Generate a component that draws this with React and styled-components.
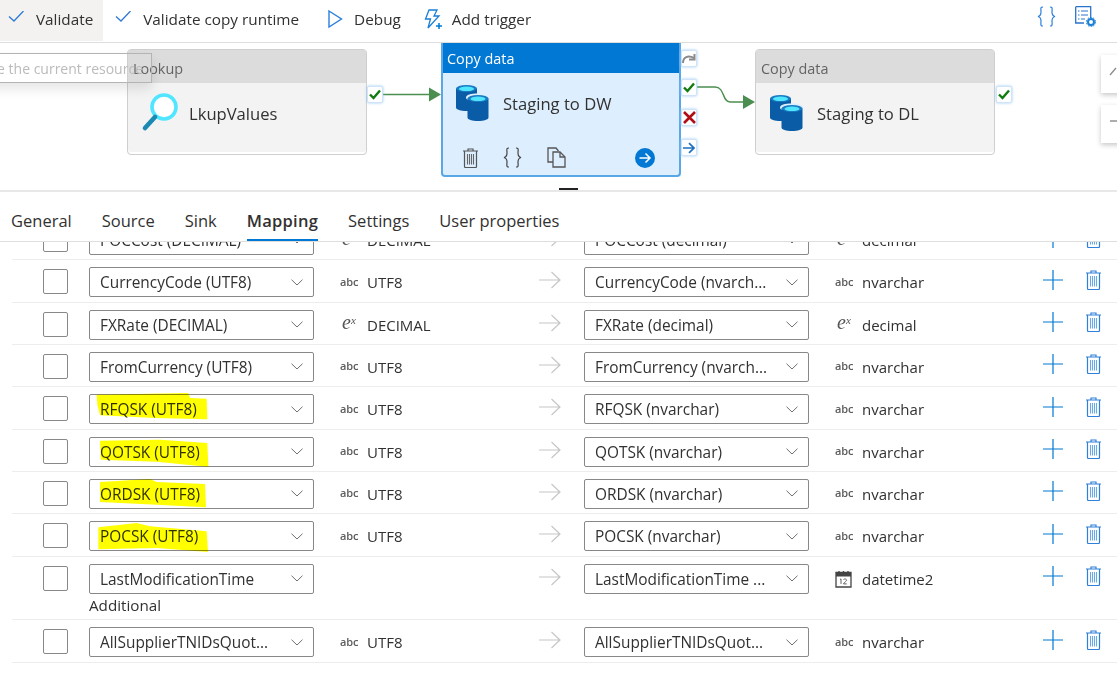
import React from "react";
import styled, { createGlobalStyle } from "styled-components";

const Global = createGlobalStyle`
  html, body { margin: 0; padding: 0; background: #fff; }
  body { font-family: "Open Sans", "Noto Sans", sans-serif; color: #323130; }
  * { box-sizing: border-box; }
`;

const Page = styled.div`
  width: 1117px; height: 682px; overflow: hidden; display: flex; flex-direction: column; background: #fff;
`;

/* ---------- toolbar ---------- */
const Toolbar = styled.header`
  height: 43px; flex: none; display: flex; align-items: flex-start; border-bottom: 1px solid #dedede;
  font-size: 15.3px;
`;
const ToolButton = styled.div`
  height: 41px; display: flex; align-items: center; gap: ${p => p.$gap ?? 12}px;
  padding: 0 ${p => p.$pr ?? 8}px 0 8px; margin-left: ${p => p.$ml ?? 0}px; white-space: nowrap;
  padding-bottom: 3px;
  background: ${p => (p.$active ? "#f3f2f1" : "transparent")};
  svg { flex: none; display: block; }
`;
const ToolSpacer = styled.div`flex: 1;`;
const ToolIcons = styled.div`
  display: flex; gap: 19px; padding: 6px 21px 0 0; svg { display: block; }
`;

/* ---------- pipeline canvas ---------- */
const Canvas = styled.section`
  position: relative; height: 147px; flex: none; overflow: hidden;
`;
const Edges = styled.svg`
  position: absolute; inset: 0; width: 100%; height: 100%; z-index: 1;
`;
const Activity = styled.div`
  position: absolute; left: ${p => p.$x}px; top: ${p => p.$y}px; width: 240px; height: ${p => p.$h ?? 106}px;
  display: flex; flex-direction: column; border-radius: ${p => (p.$selected ? "0 0 4px 4px" : "4px")};
  border: ${p => (p.$selected ? "2px solid #5aa7e6" : "1px solid #cfcfcf")};
  border-top: ${p => (p.$selected ? "none" : "1px solid #cfcfcf")};
  background: ${p => (p.$selected ? "#ddeefe" : "#f3f3f3")};
  box-shadow: ${p => (p.$selected ? "none" : "inset 0 -2px 0 #fff")};
`;
const ActivityHead = styled.div`
  height: ${p => (p.$selected ? 30 : 33)}px; flex: none; display: flex; align-items: center; padding-left: ${p => (p.$selected ? 4 : 5)}px;
  padding-top: ${p => (p.$selected ? 0 : 3)}px;
  font-size: 14.4px;
  background: ${p => (p.$selected ? "#0078d4" : "#dcdcdc")};
  color: ${p => (p.$selected ? "#fff" : "#646464")};
`;
const ActivityBody = styled.div`
  display: flex; align-items: center; gap: ${p => p.$gap ?? 15}px; padding: 0 0 2px ${p => p.$pl ?? 14}px;
  font-size: 16.6px; color: #323130; height: 62px; flex: none;
  svg { flex: none; display: block; overflow: visible; }
`;
const ActivityActions = styled.div`
  display: flex; align-items: center; padding: 12px 0 0 20px; gap: 25px; position: relative;
  svg { display: block; flex: none; }
`;
const Go = styled.div`
  margin-left: auto; margin-right: 24px; width: 20px; height: 20px;
  svg { display: block; }
`;
const Port = styled.div`
  position: absolute; left: ${p => p.$x}px; top: ${p => p.$y}px; width: 16px; height: 17px; z-index: 2;
  display: flex; align-items: center; justify-content: center; background: #fff;
  border: 1px solid #cfe4f8; border-radius: 2px; box-shadow: 0 0 3px #9ccaf2;
  svg { display: block; }
`;
const HoverTip = styled.div`
  position: absolute; left: -110px; top: 10px; width: 262px; height: 30px; z-index: 3;
  border: 1px solid #b4b4b4; box-shadow: 0 6px 12px rgba(0,0,0,.10);
  display: flex; align-items: center; justify-content: flex-end; padding-right: 8px;
  font-size: 14px; color: #bbb; white-space: nowrap; overflow: hidden;
`;
const ZoomButton = styled.div`
  position: absolute; left: 1101px; top: ${p => p.$y}px; width: 30px; height: 38px; background: #fff; z-index: 2;
  box-shadow: 0 2px 5px rgba(0,0,0,.22);
  svg { display: block; margin: 9px 0 0 8px; }
`;

/* ---------- divider + tabs ---------- */
const Divider = styled.div`
  position: relative; height: 2px; flex: none; background: #e8e8e8;
`;
const Handle = styled.div`
  position: absolute; left: 559px; top: -2px; width: 19px; height: 2px; background: #222;
`;
const Tabs = styled.nav`
  height: 50px; flex: none; display: flex; gap: 30px; padding-left: 11px; border-bottom: 1px solid #dedede;
  font-size: 16.5px; position: relative; z-index: 2; background: #fff;
`;
const Tab = styled.div`
  height: 49px; display: flex; align-items: center; padding-top: 9px; white-space: nowrap;
  font-weight: ${p => (p.$active ? 600 : 400)};
  letter-spacing: ${p => (p.$active ? ".25px" : "0")};
  border-bottom: 2px solid ${p => (p.$active ? "#0078d4" : "transparent")};
`;

/* ---------- mapping table ---------- */
const Viewport = styled.section`
  flex: 1; overflow: hidden; padding-left: 12px;
`;
const Rows = styled.div`
  margin-top: -24px;
`;
const Row = styled.div`
  display: grid; grid-template-columns: 31px 46px 225px 225px 45px 225px 234px 43px 1fr;
  height: ${p => (p.$tall ? 63.7 : 42.33)}px; padding-top: 7px; border-bottom: 1px solid #eeedec;
  align-items: start;
`;
const CheckCell = styled.div`
  grid-column: 2; width: 25px; height: 25px; margin-top: 2px; border: 1px solid #8a8886; border-radius: 2px; background: #fff;
`;
const SelectCell = styled.div`display: flex; flex-direction: column;`;
const Select = styled.div`
  position: relative; height: 30px; border: 1px solid #8a8886; border-radius: 2px; display: flex; align-items: center;
  padding: 0 11px 0 10px; font-size: 15.4px; color: #323130; background: #fff;
`;
const SelectText = styled.span`
  flex: 1; min-width: 0; overflow: hidden; white-space: nowrap; text-overflow: ellipsis; padding-top: 1px;
`;
const Chevron = styled.svg`flex: none; margin-right: -1px; display: block;`;
const Marker = styled.svg`
  position: absolute; left: -1px; top: -1px; width: 225px; height: 30px; overflow: visible;
  mix-blend-mode: multiply; pointer-events: none;
`;
const Note = styled.div`font-size: 15.2px; margin-top: 1px; color: #323130;`;
const TypeCell = styled.div`
  height: 30px; display: flex; align-items: center; padding-left: 26px; font-size: 15px; color: #323130;
`;
const TypeIcon = styled.span`
  width: 27px; flex: none; display: flex; align-items: center; height: 30px;
  svg { display: block; }
`;
const Abc = styled.span`
  font-size: 11px; font-weight: 600; color: #5c5c5c; position: relative; top: -1px; letter-spacing: -.1px;
`;
const Exp = styled.span`
  font-family: "Liberation Serif", serif; font-style: italic; font-size: 20px; color: #555; padding-left: 2px; position: relative; top: -2px;
  sup { font-size: 11px; position: relative; top: 2px; vertical-align: super; line-height: 0; }
`;
const ArrowCell = styled.div`
  height: 30px; display: flex; align-items: center;
  svg { display: block; margin-top: -4px; }
`;
const ActionCell = styled.div`
  height: 28px; display: flex; align-items: center;
  svg { display: block; margin-top: -3px; }
`;

/* ---------- icons ---------- */
const Check = () => (
  <svg width="16" height="16" viewBox="0 0 16 16" fill="none" stroke="#2f7ad6" strokeWidth="1.3"><path d="M1 8.5 6 13 15.5 3" transform="translate(0 -3)" /></svg>
);
const Play = () => (
  <svg width="16" height="20" viewBox="0 0 16 20" fill="none" stroke="#2a7fdc" strokeWidth="1.4"><path d="M2 2 14.5 10 2 18Z" /></svg>
);
const Bolt = () => (
  <svg width="19" height="21" viewBox="0 0 19 21" fill="none" stroke="#1b7fd8" strokeWidth="1.3"><path d="M5 1h8l-3 6h5L4 19l2.500-9H1.500Z" /><path d="M15 14v6M12 17h6" stroke="#0078d4" strokeWidth="1.5" /></svg>
);
const Braces = ({ color = "#2a7fdc", w = 19, h = 21 }) => (
  <svg width={w} height={h} viewBox="0 0 19 21" fill="none" stroke={color} strokeWidth="1.2"><path d="M6 1C3 1 4 3 4 6c0 3-1 4-3 4.500 2 .5 3 1.500 3 4.500s-1 5 2 5M13 1c3 0 2 2 2 5 0 3 1 4 3 4.500-2 .5-3 1.500-3 4.500s1 5-2 5" /></svg>
);
const DocGear = () => (
  <svg width="21" height="21" viewBox="0 0 21 21" fill="none"><path d="M.7.7h15v12M9 17H.7V.7" stroke="#2a74cc" strokeWidth="1.3" /><path d="M3 5h1.500M6 5h7M3 9h1.500M6 9h7M3 13h1.500M6 13h4" stroke="#2a74cc" strokeWidth="1.2" /><circle cx="16" cy="16" r="3" stroke="#1b7fd8" strokeWidth="2" /><circle cx="16" cy="16" r="4.600" stroke="#1b7fd8" strokeWidth="1" strokeDasharray="1.600 1.300" /></svg>
);
const Magnifier = () => (
  <svg width="38" height="40" viewBox="0 1 38 40" fill="none"><circle cx="22" cy="15" r="12" stroke="#50e6ff" strokeWidth="3.6" fill="#fff" /><path d="M13 25 3 36" stroke="#1b8ab3" strokeWidth="4.600" strokeLinecap="round" /></svg>
);
const Cylinder = ({ x, y }) => (
  <g transform={`translate(${x} ${y})`}>
    <path d="M0 3.500v19c0 2 4.700 3.500 10.500 3.500S21 24.500 21 22.500v-19Z" fill="#0a5ca6" />
    <ellipse cx="10.500" cy="3.500" rx="10.500" ry="3.500" fill="#1b7cc4" />
    <ellipse cx="10.500" cy="3.800" rx="7.500" ry="2.300" fill="#50e6ff" />
  </g>
);
const Database = () => (
  <svg width="33" height="37" viewBox="0 0 33 37" fill="none">
    <Cylinder x={0} y={0} />
    <path d="M10 12.500c0 2.800 5 4 11.500 4s11.500-1.200 11.500-4-5-4-11.500-4-11.500 1.200-11.500 4Z" fill="#ddeefe" />
    <Cylinder x={11.500} y={10} />
  </svg>
);
const Trash = ({ color = "#2f80d8", stripe = "#6aa9e6", w = 15, h = 20 }) => (
  <svg width={w} height={h} viewBox="0 0 15 20" fill="none">
    <path d="M5 2.500V1h5v1.500M0 3h15M1.500 3v15.500a1 1 0 0 0 1 1h10a1 1 0 0 0 1-1V3" stroke={color} strokeWidth="1.2" />
    <path d="M4.500 6v10.500M6.500 6v10.500M8.500 6v10.500M10.500 6v10.500" stroke={stripe} strokeWidth="1.100" />
  </svg>
);
const Copy = () => (
  <svg width="19" height="21" viewBox="0 0 19 21" fill="none" stroke="#555" strokeWidth="1.300"><path d="M6 15H1V1h8l2.500 3" /><path d="M6 5h7l5 5v10H6Z" /><path d="M13 5v5h5" /></svg>
);
const GoIcon = () => (
  <svg width="20" height="20" viewBox="0 0 20 20" fill="none"><circle cx="10" cy="10" r="10" fill="#0078d4" /><path d="M4.500 10h10M10.500 5.500l4.500 4.500-4.500 4.500" stroke="#fff" strokeWidth="1.500" /></svg>
);
const Tick = () => (
  <svg width="12" height="11" viewBox="0 0 12 11" fill="none" stroke="#107c10" strokeWidth="2.400"><path d="M1 5.500 4.500 9 11 1.500" /></svg>
);
const Cross = () => (
  <svg width="13" height="13" viewBox="0 0 13 13" fill="none" stroke="#b00d14" strokeWidth="2.600"><path d="M1 1l11 11M12 1 1 12" /></svg>
);
const Skip = () => (
  <svg width="14" height="12" viewBox="0 0 14 12" fill="none" stroke="#8a8a8a" strokeWidth="2"><path d="M1 10C1 4 6 2 12 5" /><path d="M12.500 1v5.500H7" /></svg>
);
const Next = () => (
  <svg width="12" height="12" viewBox="0 0 12 12" fill="none" stroke="#1f6fc0" strokeWidth="1.700"><path d="M0 6h10.500M6 1.200 11 6l-5 4.800" /></svg>
);
const Calendar = () => (
  <svg width="17" height="18" viewBox="0 0 17 18" fill="none">
    <path d="M1 2.500h15v14.500H1Z" stroke="#444" strokeWidth="1.300" />
    <path d="M1 3h15v3.500H1Z" fill="#444" />
    <path d="M4 1v3M8.500 1v3M13 1v3" stroke="#444" strokeWidth="1.300" />
    <path d="M5 9.500l1-.6v5M8.500 9.500c1.500-1 3-.5 3 .8 0 1-2.500 2.200-3 3.600h3.300" stroke="#555" strokeWidth=".9" />
  </svg>
);
const ArrowRight = () => (
  <svg width="22" height="18" viewBox="0 0 22 18" fill="none" stroke="#c6c6c6" strokeWidth="1.200"><path d="M0 9h21M12.500 1 21 9l-8.500 8" /></svg>
);
const Plus = () => (
  <svg width="20" height="20" viewBox="0 0 20 20" fill="none" stroke="#0078d4" strokeWidth="1.200"><path d="M10 0v20M0 10h20" /></svg>
);
const Caret = () => (
  <Chevron width="12" height="7" viewBox="0 0 12 7" fill="none" stroke="#707070" strokeWidth="1"><path d="M.5.700 6 6l5.500-5.300" /></Chevron>
);

const TypeBadge = ({ kind }) => (
  <TypeIcon>
    {kind === "abc" && <Abc>abc</Abc>}
    {kind === "e" && <Exp>e<sup>x</sup></Exp>}
    {kind === "cal" && <Calendar />}
  </TypeIcon>
);

/* yellow pen strokes, in 3x coordinates of the screenshot */
const marks = {
  RFQSK: { box: "267 28 675 90", pts: "290,30 565,25 570,40 620,42 622,104 465,100 300,92 292,60" },
  QOTSK: { box: "267 154 675 90", pts: "300,165 480,162 622,172 625,243 590,240 470,228 302,222" },
  ORDSK: { box: "267 283 675 90", pts: "300,292 450,283 470,292 615,298 618,368 470,360 300,352" },
  POCSK: { box: "267 409 675 90", pts: "295,428 410,415 450,425 620,440 624,502 470,490 295,494" },
};

const rows = [
  { s: "POCCost (DECIMAL)", st: "e", st2: "DECIMAL", t: "POCCost (decimal)", tt: "decimal" },
  { s: "CurrencyCode (UTF8)", st: "abc", st2: "UTF8", t: "CurrencyCode (nvarch...", tt: "nvarchar" },
  { s: "FXRate (DECIMAL)", st: "e", st2: "DECIMAL", t: "FXRate (decimal)", tt: "decimal" },
  { s: "FromCurrency (UTF8)", st: "abc", st2: "UTF8", t: "FromCurrency (nvarch...", tt: "nvarchar" },
  { s: "RFQSK (UTF8)", st: "abc", st2: "UTF8", t: "RFQSK (nvarchar)", tt: "nvarchar", mark: "RFQSK" },
  { s: "QOTSK (UTF8)", st: "abc", st2: "UTF8", t: "QOTSK (nvarchar)", tt: "nvarchar", mark: "QOTSK" },
  { s: "ORDSK (UTF8)", st: "abc", st2: "UTF8", t: "ORDSK (nvarchar)", tt: "nvarchar", mark: "ORDSK" },
  { s: "POCSK (UTF8)", st: "abc", st2: "UTF8", t: "POCSK (nvarchar)", tt: "nvarchar", mark: "POCSK" },
  { s: "LastModificationTime", st: "", st2: "", t: "LastModificationTime ...", tt: "datetime2", tk: "cal", note: "Additional" },
  { s: "AllSupplierTNIDsQuot...", st: "abc", st2: "UTF8", t: "AllSupplierTNIDsQuot...", tt: "nvarchar" },
];

const MappingRow = ({ r }) => (
  <Row $tall={!!r.note}>
    <CheckCell />
    <SelectCell>
      <Select>
        <SelectText>{r.s}</SelectText>
        <Caret />
        {r.mark && (
          <Marker viewBox={marks[r.mark].box} preserveAspectRatio="none">
            <polygon points={marks[r.mark].pts} fill="#ffff00" />
          </Marker>
        )}
      </Select>
      {r.note && <Note>{r.note}</Note>}
    </SelectCell>
    <TypeCell>
      <TypeBadge kind={r.st} />
      {r.st2}
    </TypeCell>
    <ArrowCell><ArrowRight /></ArrowCell>
    <Select>
      <SelectText>{r.t}</SelectText>
      <Caret />
    </Select>
    <TypeCell>
      <TypeBadge kind={r.tk || r.st} />
      {r.tt}
    </TypeCell>
    <ActionCell><Plus /></ActionCell>
    <ActionCell><Trash /></ActionCell>
  </Row>
);

export default function App() {
  return (
    <Page>
      <Global />
      <Toolbar>
        <ToolButton $active $pr={10}><Check />Validate</ToolButton>
        <ToolButton $ml={4}><Check />Validate copy runtime</ToolButton>
        <ToolButton $ml={12} $gap={11}><Play />Debug</ToolButton>
        <ToolButton $ml={7} $gap={9}><Bolt />Add trigger</ToolButton>
        <ToolSpacer />
        <ToolIcons><Braces /><DocGear /></ToolIcons>
      </Toolbar>

      <Canvas>
        <Edges viewBox="0 0 1117 147" fill="none">
          <path d="M383 51.500H430" stroke="#4a8f4f" strokeWidth="1.400" />
          <path d="M429 44.500 441 51.500 429 58.500Z" fill="#4a8f4f" />
          <path d="M697 44h18c10 0 7 15 15 15h14" stroke="#4a8f4f" strokeWidth="1.400" />
          <path d="M743 52 755 59 743 66Z" fill="#4a8f4f" />
        </Edges>

        <Activity $x={127} $y={6}>
          <ActivityHead>Lookup</ActivityHead>
          <ActivityBody $gap={9}><Magnifier />LkupValues</ActivityBody>
        </Activity>
        <HoverTip>Validate the current resource</HoverTip>
        <Port $x={367} $y={43}><Tick /></Port>

        <Activity $x={441} $y={0} $h={134} $selected>
          <ActivityHead $selected>Copy data</ActivityHead>
          <ActivityBody $gap={14} $pl={13}><Database />Staging to DW</ActivityBody>
          <ActivityActions>
            <Trash color="#555" stripe="#666" w={15} h={20} />
            <Braces color="#444" />
            <Copy />
            <Go><GoIcon /></Go>
          </ActivityActions>
        </Activity>
        <Port $x={681} $y={7}><Skip /></Port>
        <Port $x={681} $y={36}><Tick /></Port>
        <Port $x={681} $y={66}><Cross /></Port>
        <Port $x={681} $y={96}><Next /></Port>

        <Activity $x={755} $y={6}>
          <ActivityHead>Copy data</ActivityHead>
          <ActivityBody $gap={14}><Database />Staging to DL</ActivityBody>
        </Activity>
        <Port $x={996} $y={43}><Tick /></Port>

        <ZoomButton $y={12}>
          <svg width="14" height="14" viewBox="0 0 14 14" fill="none" stroke="#8a8a8a" strokeWidth="1.300"><path d="M1 11 7 4" /></svg>
        </ZoomButton>
        <ZoomButton $y={62}>
          <svg width="14" height="14" viewBox="0 0 14 14" fill="none" stroke="#8a8a8a" strokeWidth="1.400"><path d="M1 7h12" /></svg>
        </ZoomButton>
      </Canvas>

      <Divider><Handle /></Divider>

      <Tabs>
        <Tab>General</Tab>
        <Tab>Source</Tab>
        <Tab>Sink</Tab>
        <Tab $active>Mapping</Tab>
        <Tab>Settings</Tab>
        <Tab>User properties</Tab>
      </Tabs>

      <Viewport>
        <Rows>
          {rows.map(r => <MappingRow key={r.s + r.t} r={r} />)}
        </Rows>
      </Viewport>
    </Page>
  );
}
